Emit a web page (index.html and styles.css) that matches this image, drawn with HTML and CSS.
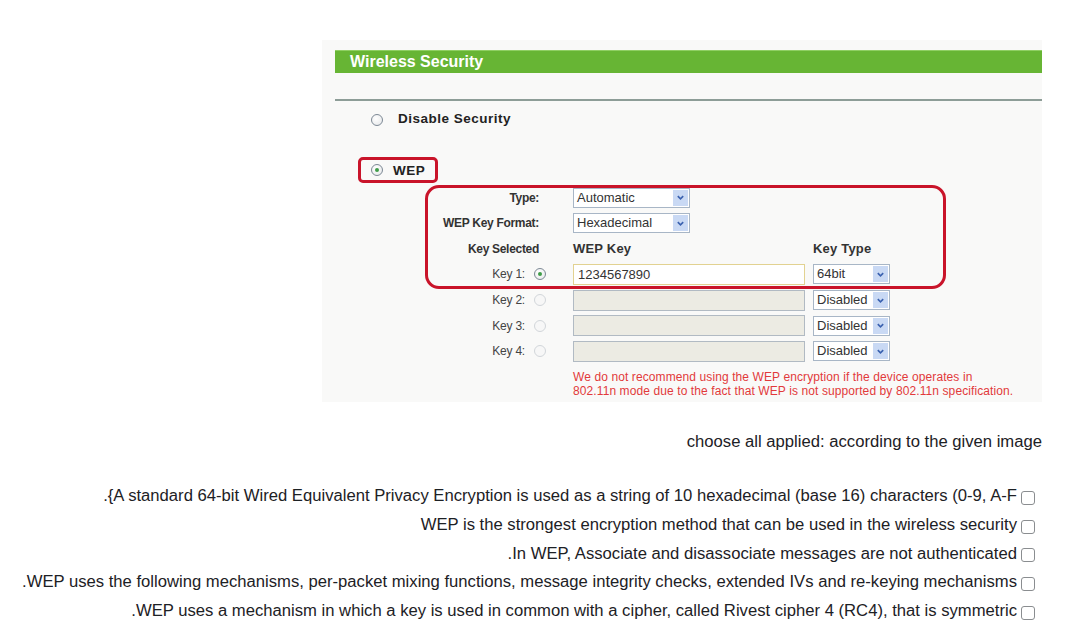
FILE: index.html
```html
<!DOCTYPE html>
<html lang="en">
<head>
<meta charset="utf-8">
<title>Wireless Security question</title>
<link rel="stylesheet" href="styles.css">
</head>
<body>
<div class="shot">
  <div class="shot-header">Wireless Security</div>
  <div class="shot-rule"></div>
  <div class="mode-row">
    <span class="radio"></span>
    <span class="mode-label">Disable Security</span>
  </div>
  <div class="wep-box">
    <span class="radio checked"></span>
    <span class="mode-label">WEP</span>
  </div>
  <div class="form-grid">
    <div class="lbl">Type:</div>
    <div class="select wide"><span class="sel-text">Automatic</span><span class="arrow"><svg viewBox="0 0 10 10" width="9" height="9"><path d="M2 3.5 L5 6.5 L8 3.5" fill="none" stroke="#3b62b0" stroke-width="1.8"/></svg></span></div>
    <div></div>

    <div class="lbl">WEP Key Format:</div>
    <div class="select wide"><span class="sel-text">Hexadecimal</span><span class="arrow"><svg viewBox="0 0 10 10" width="9" height="9"><path d="M2 3.5 L5 6.5 L8 3.5" fill="none" stroke="#3b62b0" stroke-width="1.8"/></svg></span></div>
    <div></div>

    <div class="lbl">Key Selected</div>
    <div class="col-head">WEP Key</div>
    <div class="col-head">Key Type</div>

    <div class="key-lbl">Key 1:<span class="radio small checked"></span></div>
    <div class="key-input active">1234567890</div>
    <div class="select narrow"><span class="sel-text">64bit</span><span class="arrow"><svg viewBox="0 0 10 10" width="9" height="9"><path d="M2 3.5 L5 6.5 L8 3.5" fill="none" stroke="#3b62b0" stroke-width="1.8"/></svg></span></div>

    <div class="key-lbl">Key 2:<span class="radio small off"></span></div>
    <div class="key-input"></div>
    <div class="select narrow"><span class="sel-text">Disabled</span><span class="arrow"><svg viewBox="0 0 10 10" width="9" height="9"><path d="M2 3.5 L5 6.5 L8 3.5" fill="none" stroke="#3b62b0" stroke-width="1.8"/></svg></span></div>

    <div class="key-lbl">Key 3:<span class="radio small off"></span></div>
    <div class="key-input"></div>
    <div class="select narrow"><span class="sel-text">Disabled</span><span class="arrow"><svg viewBox="0 0 10 10" width="9" height="9"><path d="M2 3.5 L5 6.5 L8 3.5" fill="none" stroke="#3b62b0" stroke-width="1.8"/></svg></span></div>

    <div class="key-lbl">Key 4:<span class="radio small off"></span></div>
    <div class="key-input"></div>
    <div class="select narrow"><span class="sel-text">Disabled</span><span class="arrow"><svg viewBox="0 0 10 10" width="9" height="9"><path d="M2 3.5 L5 6.5 L8 3.5" fill="none" stroke="#3b62b0" stroke-width="1.8"/></svg></span></div>
  </div>
  <div class="warning">We do not recommend using the WEP encryption if the device operates in<br>802.11n mode due to the fact that WEP is not supported by 802.11n specification.</div>
  <div class="annot-box"></div>
</div>

<div class="question">choose all applied: according to the given image</div>

<div class="options">
  <label class="option"><span class="opt-text">.{A standard 64-bit Wired Equivalent Privacy Encryption is used as a string of 10 hexadecimal (base 16) characters (0-9, A-F</span><input type="checkbox" class="check"></label>
  <label class="option"><span class="opt-text">WEP is the strongest encryption method that can be used in the wireless security</span><input type="checkbox" class="check"></label>
  <label class="option"><span class="opt-text">.In WEP, Associate and disassociate messages are not authenticated</span><input type="checkbox" class="check"></label>
  <label class="option"><span class="opt-text">.WEP uses the following mechanisms, per-packet mixing functions, message integrity checks, extended IVs and re-keying mechanisms</span><input type="checkbox" class="check"></label>
  <label class="option"><span class="opt-text">.WEP uses a mechanism in which a key is used in common with a cipher, called Rivest cipher 4 (RC4), that is symmetric</span><input type="checkbox" class="check"></label>
</div>
</body>
</html>
```

FILE: styles.css
```css
html, body {
  margin: 0;
  padding: 0;
  background: #ffffff;
  font-family: "Liberation Sans", Arial, sans-serif;
}

.shot {
  position: relative;
  margin: 40px 0 0 322px;
  width: 720px;
  height: 362px;
  box-sizing: border-box;
  padding: 10px 0 0 13px;
  background: #f9f9f8;
  color: #333;
}

.shot-header {
  height: 23px;
  line-height: 22px;
  background: #67b534;
  border-top: 1px solid #8fcf63;
  box-sizing: border-box;
  color: #ffffff;
  font-weight: bold;
  font-size: 16px;
  padding-left: 15px;
}

.shot-rule {
  margin-top: 26px;
  height: 2px;
  background: #8d9d97;
}

.mode-row {
  margin-top: 7px;
  height: 20px;
  display: flex;
  align-items: center;
  padding-left: 36px;
}

.mode-label {
  font-weight: bold;
  font-size: 13.5px;
  color: #222;
  letter-spacing: 0.5px;
  margin-left: 15px;
}

.radio {
  display: inline-block;
  width: 10px;
  height: 10px;
  border: 1px solid #7d8995;
  border-radius: 50%;
  background: radial-gradient(circle at 40% 35%, #ffffff, #e4e6e8);
  position: relative;
  flex: none;
}

.mode-row .radio {
  margin-top: 3px;
}

.radio.checked::after {
  content: "";
  position: absolute;
  left: 3px;
  top: 3px;
  width: 4px;
  height: 4px;
  border-radius: 50%;
  background: #3f9c48;
}

.radio.off {
  border-color: #d2d6da;
  background: #f7f7f7;
}

.wep-box {
  margin: 29px 0 0 23px;
  width: 80px;
  height: 26px;
  box-sizing: border-box;
  border: 3px solid #c9142a;
  border-radius: 5px;
  display: flex;
  align-items: center;
  padding-left: 10px;
}

.wep-box .mode-label {
  margin-left: 10px;
}

.form-grid {
  margin-top: 4px;
  display: grid;
  grid-template-columns: 212px 232px 77px;
  column-gap: 26px;
  grid-template-rows: repeat(7, 21px);
  row-gap: 4.67px;
  align-items: center;
  font-size: 12px;
}

.form-grid > :nth-child(3n+2) { margin-right: -18px; }
.form-grid > :nth-child(3n) { margin-left: -18px; }

.lbl {
  text-align: right;
  font-weight: bold;
  color: #333;
  letter-spacing: -0.3px;
  padding-right: 8px;
}

.col-head {
  font-weight: bold;
  font-size: 13px;
  color: #333;
  letter-spacing: 0.2px;
}

.key-lbl {
  display: flex;
  justify-content: flex-end;
  align-items: center;
  color: #444;
  font-size: 12px;
  letter-spacing: -0.2px;
  padding-right: 1px;
}

.key-lbl .radio {
  margin-left: 9px;
}

.select {
  height: 20px;
  box-sizing: border-box;
  border: 1px solid #a8b6c6;
  background: #ffffff;
  display: flex;
  align-items: stretch;
  justify-content: space-between;
  font-size: 13px;
  color: #333;
}

.select.wide { width: 117px; }
.select.narrow { width: 77px; }

.sel-text {
  padding-left: 3px;
  line-height: 18px;
}

.arrow {
  width: 15px;
  margin: 1px;
  background: #c9d9f4;
  display: flex;
  align-items: center;
  justify-content: center;
}

.key-input {
  width: 232px;
  height: 21px;
  box-sizing: border-box;
  border: 1px solid #b1bac3;
  background: #ecebe3;
  font-size: 13px;
  line-height: 19px;
  padding-left: 4px;
  color: #333;
}

.key-input.active {
  background: #ffffff;
  border-color: #e2d291;
}

.warning {
  margin: 8px 0 0 238px;
  font-size: 12px;
  line-height: 14px;
  color: #e2393b;
  letter-spacing: 0.1px;
}

.annot-box {
  position: absolute;
  left: 103px;
  top: 145px;
  width: 521px;
  height: 104px;
  box-sizing: border-box;
  border: 3px solid #c9142a;
  border-radius: 14px;
  pointer-events: none;
}

.question {
  margin-top: 30px;
  padding-right: 25px;
  text-align: right;
  font-size: 16.65px;
  line-height: 19px;
  color: #1d2125;
}

.options {
  margin-top: 31px;
  padding-right: 32px;
  display: flex;
  flex-direction: column;
  align-items: flex-end;
}

.option {
  height: 28.7px;
  display: flex;
  align-items: center;
  font-size: 16.65px;
  color: #1d2125;
}

.check {
  appearance: none;
  -webkit-appearance: none;
  margin: 3px 0 0 4px;
  width: 14px;
  height: 14px;
  box-sizing: border-box;
  border: 1px solid #8a8d90;
  border-radius: 3px;
  background: #ffffff;
}
```
